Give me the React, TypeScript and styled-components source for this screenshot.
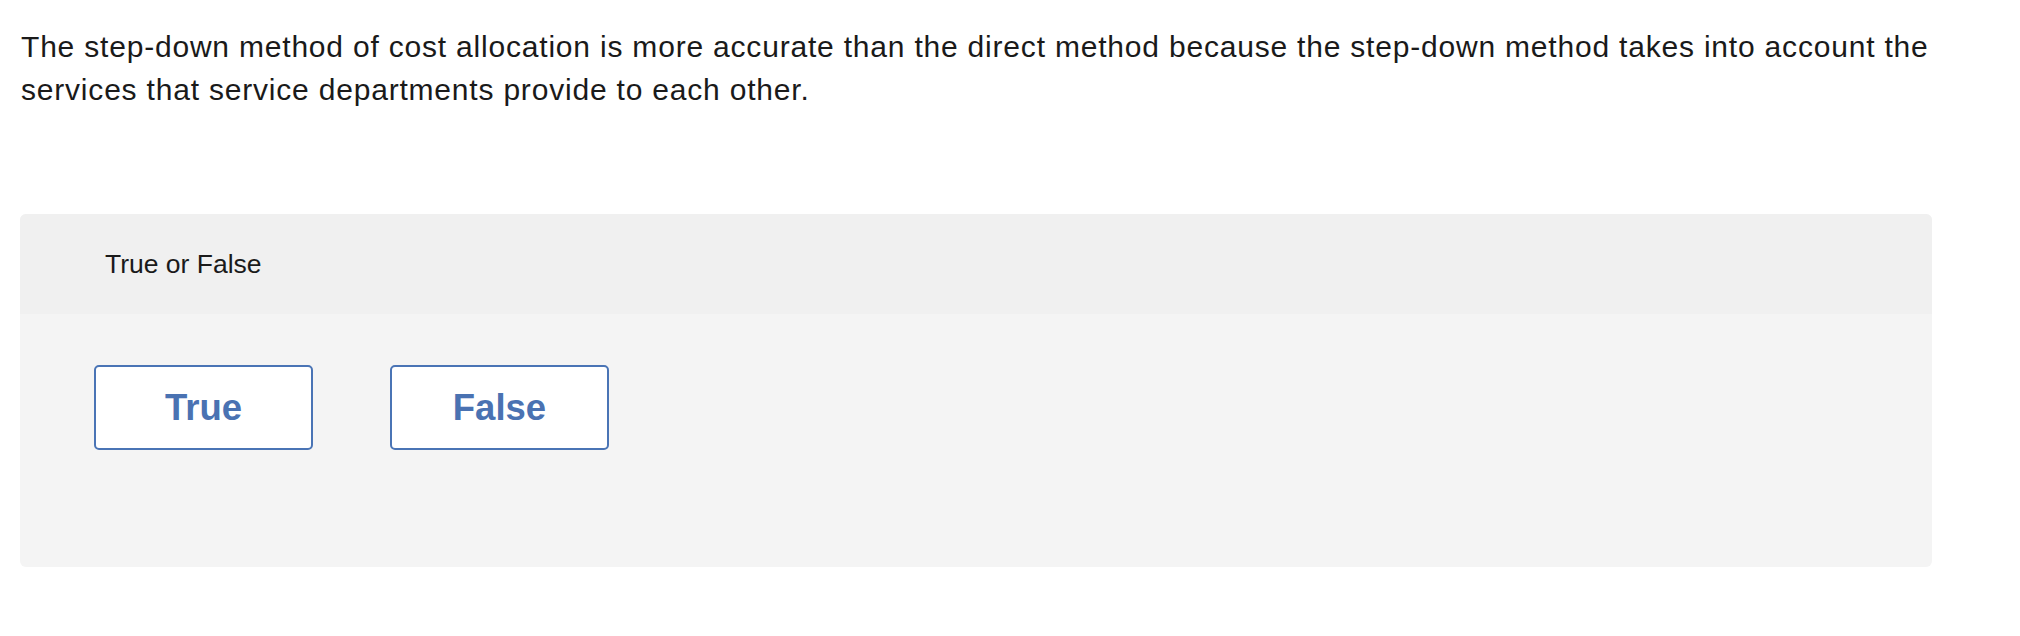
import styled, { createGlobalStyle } from "styled-components";

const GlobalStyle = createGlobalStyle`
  body {
    margin: 0;
    background: #ffffff;
    font-family: "Liberation Sans", Arial, sans-serif;
    color: #1f1f1f;
  }
`;

const choices = ["True", "False"];

export default function App() {
  return (
    <>
      <GlobalStyle />
      <Page>
        <Prompt>
          The step-down method of cost allocation is more accurate than the
          direct method because the step-down method takes into account the
          services that service departments provide to each other.
        </Prompt>
        <Question>
          <QuestionHeader>True or False</QuestionHeader>
          <Answers>
            {choices.map((choice) => (
              <Choice key={choice} type="button">
                {choice}
              </Choice>
            ))}
          </Answers>
        </Question>
      </Page>
    </>
  );
}

const Page = styled.main`
  width: 1912px;
  padding: 25px 0 0 20px;
`;

const Prompt = styled.p`
  margin: 0 0 103px 1px;
  font-size: 30px;
  line-height: 43px;
  letter-spacing: 0.8px;
  color: #1a1a1a;
`;

const Question = styled.section`
  border-radius: 6px;
  overflow: hidden;
  background-color: #f4f4f4;
`;

const QuestionHeader = styled.div`
  display: flex;
  align-items: center;
  height: 100px;
  padding-left: 85px;
  background-color: #f0f0f0;
  font-size: 26.5px;
  color: #1a1a1a;
`;

const Answers = styled.div`
  display: flex;
  column-gap: 77px;
  height: 253px;
  padding: 51px 0 0 74px;
  box-sizing: border-box;
`;

const Choice = styled.button`
  width: 219px;
  height: 85px;
  border: 2px solid #4a74b5;
  border-radius: 5px;
  background-color: #ffffff;
  color: #4a72b2;
  font-family: "Liberation Sans", Arial, sans-serif;
  font-weight: bold;
  font-size: 36.5px;
  cursor: pointer;
`;
